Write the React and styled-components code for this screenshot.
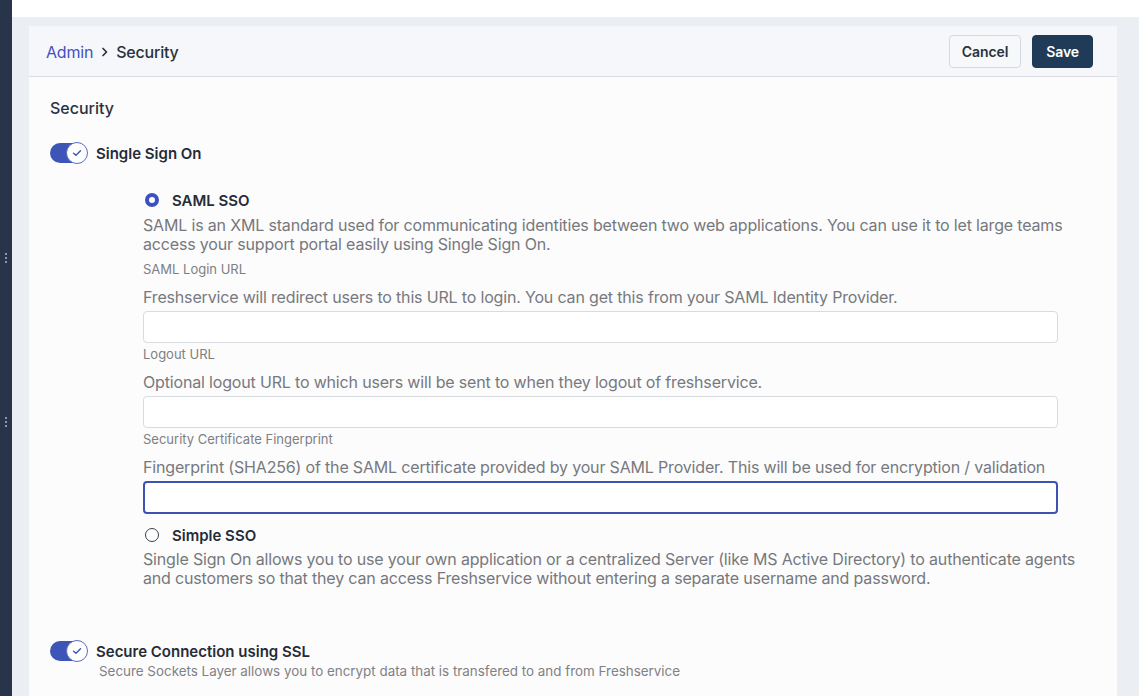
import styled, { createGlobalStyle } from "styled-components";

const Global = createGlobalStyle`
  html, body { margin: 0; padding: 0; }
  body {
    font-family: Inter, "Noto Sans", sans-serif;
    background: #ebeef3;
    -webkit-font-smoothing: antialiased;
  }
`;

function Toggle() {
  return (
    <Switch>
      <Knob>
        <svg width="10" height="8" viewBox="0 0 10 8">
          <path d="M1.5 4.2 L4 6.3 L8.5 1.8" fill="none" stroke="#3d52b5" strokeWidth="1.4" strokeLinecap="round" strokeLinejoin="round" />
        </svg>
      </Knob>
    </Switch>
  );
}

export default function App() {
  return (
    <>
      <Global />
      <Page>
        <Sidebar>
          <Dots />
          <Dots />
        </Sidebar>
        <Main>
          <TopBar />
          <Workspace>
            <Card>
              <Header>
                <Crumbs>
                  <CrumbLink>Admin</CrumbLink>
                  <Chevron viewBox="0 0 8 10" width="8" height="10">
                    <path d="M2 1.5 L5.5 5 L2 8.5" fill="none" stroke="#2b3340" strokeWidth="1.7" strokeLinecap="round" strokeLinejoin="round" />
                  </Chevron>
                  <Crumb>Security</Crumb>
                </Crumbs>
                <Actions>
                  <Button>Cancel</Button>
                  <Button $primary>Save</Button>
                </Actions>
              </Header>

              <Body>
                <SectionTitle>Security</SectionTitle>

                <ToggleRow $top>
                  <Toggle />
                  <ToggleLabel>Single Sign On</ToggleLabel>
                </ToggleRow>

                <Options>
                  <RadioRow>
                    <Radio $checked />
                    <RadioLabel>SAML SSO</RadioLabel>
                  </RadioRow>
                  <Desc>
                    SAML is an XML standard used for communicating identities between two web applications. You can use it to let large teams access your support portal easily using Single Sign On.
                  </Desc>

                  <Field>
                    <FieldLabel>SAML Login URL</FieldLabel>
                    <Hint>Freshservice will redirect users to this URL to login. You can get this from your SAML Identity Provider.</Hint>
                    <Input />
                  </Field>

                  <Field>
                    <FieldLabel>Logout URL</FieldLabel>
                    <Hint>Optional logout URL to which users will be sent to when they logout of freshservice.</Hint>
                    <Input />
                  </Field>

                  <Field>
                    <FieldLabel>Security Certificate Fingerprint</FieldLabel>
                    <Hint>Fingerprint (SHA256) of the SAML certificate provided by your SAML Provider. This will be used for encryption / validation</Hint>
                    <Input $focused />
                  </Field>

                  <RadioRow $gap>
                    <Radio />
                    <RadioLabel>Simple SSO</RadioLabel>
                  </RadioRow>
                  <Desc $loose>
                    Single Sign On allows you to use your own application or a centralized Server (like MS Active Directory) to authenticate agents and customers so that they can access Freshservice without entering a separate username and password.
                  </Desc>
                </Options>

                <SslBlock>
                  <ToggleRow>
                    <Toggle />
                    <ToggleLabel>Secure Connection using SSL</ToggleLabel>
                  </ToggleRow>
                  <SubText>Secure Sockets Layer allows you to encrypt data that is transfered to and from Freshservice</SubText>
                </SslBlock>
              </Body>
            </Card>
          </Workspace>
        </Main>
      </Page>
    </>
  );
}

const Page = styled.div`
  display: flex;
  width: 1139px;
  height: 696px;
  overflow: hidden;
`;

const Sidebar = styled.div`
  width: 12px;
  flex-shrink: 0;
  background: #27344a;
  display: flex;
  flex-direction: column;
  align-items: center;
  padding-top: 252px;
  gap: 152px;
`;

const Dots = styled.div`
  width: 2px;
  height: 12px;
  background: radial-gradient(circle, #8a95a8 1px, transparent 1.2px) 0 0 / 2px 4px repeat-y;
`;

const Main = styled.div`
  flex: 1;
  display: flex;
  flex-direction: column;
`;

const TopBar = styled.div`
  height: 17px;
  background: #ffffff;
  flex-shrink: 0;
`;

const Workspace = styled.div`
  flex: 1;
  padding: 9px 22px 0 17px;
  background: #ebeef3;
`;

const Card = styled.div`
  background: #fcfcfd;
  height: 100%;
`;

const Header = styled.div`
  height: 51px;
  box-sizing: border-box;
  display: flex;
  align-items: center;
  justify-content: space-between;
  padding: 0 24px 0 17px;
  background: #f5f7fa;
  border-bottom: 1px solid #d9dde3;
`;

const Crumbs = styled.div`
  display: flex;
  align-items: center;
  gap: 8px;
  font-size: 16px;
  letter-spacing: -0.2px;
  padding-top: 2px;
`;

const CrumbLink = styled.span`
  color: #3f51c2;
`;

const Chevron = styled.svg`
  display: block;
  margin-right: -1px;
`;

const Crumb = styled.span`
  color: #29313d;
  font-weight: 500;
`;

const Actions = styled.div`
  display: flex;
  gap: 11px;
  padding-top: 1px;
`;

const Button = styled.button`
  height: 33px;
  padding: 0 ${(p) => (p.$primary ? "13px" : "12px")};
  border-radius: 4px;
  font-family: inherit;
  font-size: 14px;
  font-weight: 600;
  letter-spacing: -0.1px;
  border: 1px solid ${(p) => (p.$primary ? "#1e3a56" : "#d5d9df")};
  background: ${(p) => (p.$primary ? "#1f3b58" : "#f7f8fa")};
  color: ${(p) => (p.$primary ? "#ffffff" : "#2a323d")};
`;

const Body = styled.div`
  padding: 21px 21px 0 21px;
`;

const SectionTitle = styled.div`
  font-size: 16px;
  font-weight: 500;
  color: #2a313c;
  line-height: 20px;
`;

const ToggleRow = styled.div`
  display: flex;
  align-items: center;
  gap: 9px;
  height: 20px;
  margin-top: ${(p) => (p.$top ? "25px" : "0")};
`;

const Switch = styled.div`
  width: 37px;
  height: 20px;
  border-radius: 10px;
  background: #3e55b8;
  position: relative;
  flex-shrink: 0;
`;

const Knob = styled.div`
  position: absolute;
  right: -1px;
  top: -1px;
  width: 20px;
  height: 20px;
  border-radius: 50%;
  background: #ffffff;
  border: 1px solid #5a6cc6;
  display: flex;
  align-items: center;
  justify-content: center;
`;

const ToggleLabel = styled.span`
  font-size: 15px;
  font-weight: 600;
  color: #252c38;
`;

const Options = styled.div`
  padding-left: 93px;
  margin-top: 27px;
`;

const RadioRow = styled.div`
  display: flex;
  align-items: center;
  gap: 13px;
  padding-left: 2px;
  height: 20px;
  margin-top: ${(p) => (p.$gap ? "11px" : "0")};
`;

const Radio = styled.span`
  width: 14px;
  height: 14px;
  box-sizing: border-box;
  border-radius: 50%;
  border: ${(p) => (p.$checked ? "4px solid #3e4fc0" : "1.5px solid #3a3f47")};
  background: #ffffff;
  flex-shrink: 0;
`;

const RadioLabel = styled.span`
  font-size: 15px;
  font-weight: 600;
  color: #252c38;
`;

const Desc = styled.div`
  font-size: 16px;
  line-height: 19px;
  letter-spacing: -0.17px;
  color: #76787c;
  margin-top: ${(p) => (p.$loose ? "5px" : "6px")};
  margin-bottom: 7px;
  max-width: 940px;
`;

const Field = styled.div`
  display: flex;
  flex-direction: column;
  margin-top: 3px;
  &:first-of-type { margin-top: 0; }
`;

const FieldLabel = styled.div`
  font-size: 13px;
  line-height: 17px;
  color: #7d7f83;
`;

const Hint = styled.div`
  font-size: 16px;
  line-height: 20px;
  letter-spacing: -0.17px;
  color: #77797d;
  margin-top: 9px;
`;

const Input = styled.div`
  width: 915px;
  height: ${(p) => (p.$focused ? "33px" : "32px")};
  box-sizing: border-box;
  margin-top: 4px;
  border-radius: 4px;
  background: #ffffff;
  border: ${(p) => (p.$focused ? "2px solid #3d53b4" : "1px solid #d8dbe0")};
`;

const SslBlock = styled.div`
  margin-top: 53px;
`;

const SubText = styled.div`
  font-size: 13.4px;
  line-height: 17px;
  color: #7f8185;
  margin: 2px 0 0 49px;
`;
